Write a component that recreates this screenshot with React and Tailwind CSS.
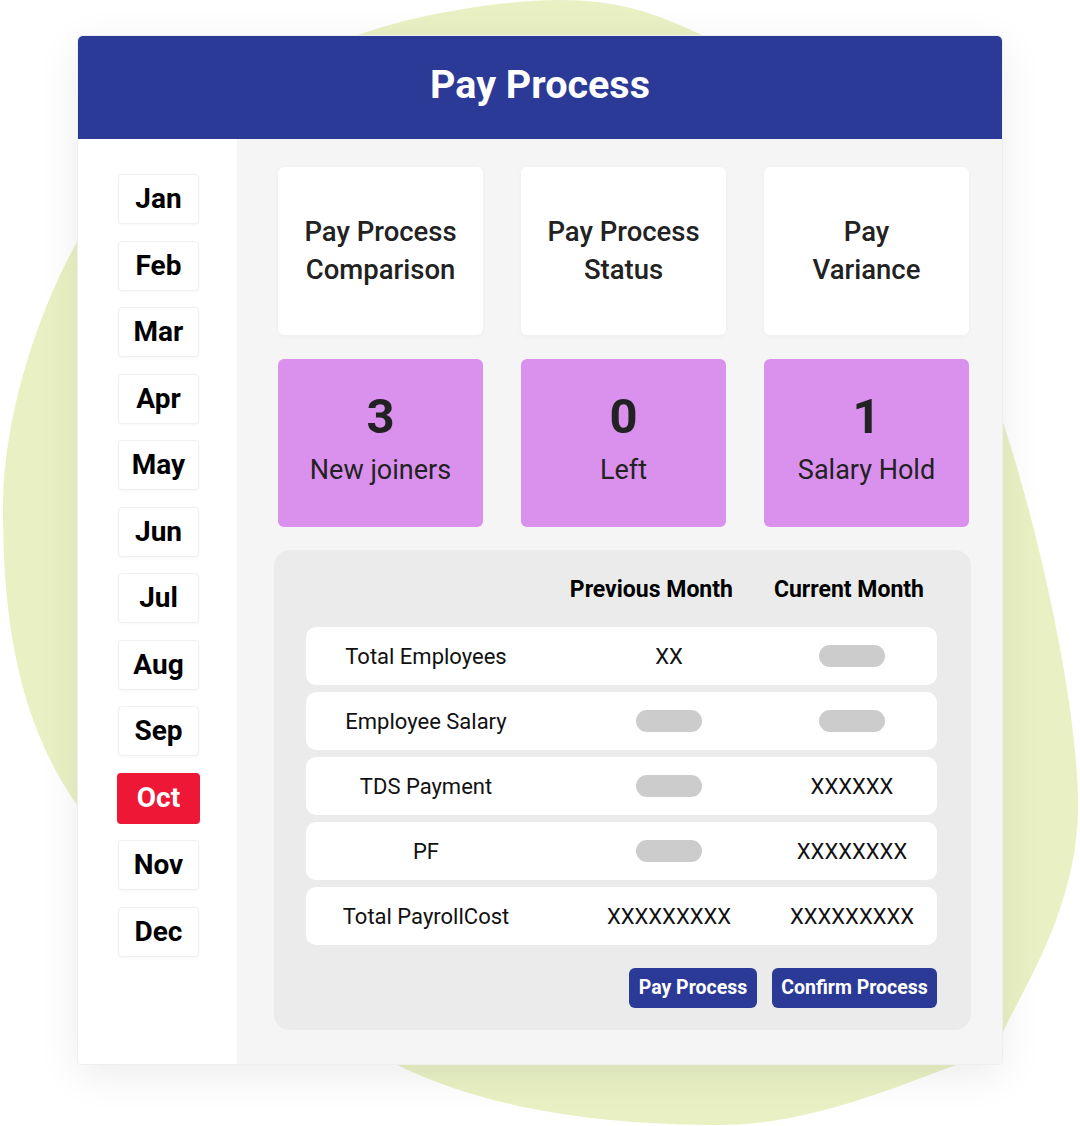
import React from 'react'

const months = ['Jan', 'Feb', 'Mar', 'Apr', 'May', 'Jun', 'Jul', 'Aug', 'Sep', 'Oct', 'Nov', 'Dec']

const topCards = [
  ['Pay Process', 'Comparison'],
  ['Pay Process', 'Status'],
  ['Pay', 'Variance'],
]

const stats = [
  { value: '3', label: 'New joiners' },
  { value: '0', label: 'Left' },
  { value: '1', label: 'Salary Hold' },
]

// null = grey placeholder pill
const rows = [
  { label: 'Total Employees', prev: 'XX', curr: null },
  { label: 'Employee Salary', prev: null, curr: null },
  { label: 'TDS Payment', prev: null, curr: 'XXXXXX' },
  { label: 'PF', prev: null, curr: 'XXXXXXXX' },
  { label: 'Total PayrollCost', prev: 'XXXXXXXXX', curr: 'XXXXXXXXX' },
]

// outline of the green backdrop blob
const blobPoints = [
  [560, 0], [702, 35], [860, 140], [1003, 422], [1078, 806], [1003, 1032], [962, 1063],
  [721, 1125], [393, 1063], [77, 805], [3, 507], [77, 242], [220, 125], [358, 35],
]

function smoothPath(pts) {
  const n = pts.length
  let d = `M ${pts[0][0]} ${pts[0][1]}`
  for (let i = 0; i < n; i++) {
    const p0 = pts[(i - 1 + n) % n]
    const p1 = pts[i]
    const p2 = pts[(i + 1) % n]
    const p3 = pts[(i + 2) % n]
    const c1 = [p1[0] + (p2[0] - p0[0]) / 6, p1[1] + (p2[1] - p0[1]) / 6]
    const c2 = [p2[0] - (p3[0] - p1[0]) / 6, p2[1] - (p3[1] - p1[1]) / 6]
    d += ` C ${c1[0]} ${c1[1]}, ${c2[0]} ${c2[1]}, ${p2[0]} ${p2[1]}`
  }
  return d + ' Z'
}

function Cell({ value }) {
  if (value === null) {
    return <div className="w-[66px] h-[22px] rounded-full bg-[#cccccc]" />
  }
  return <span className="whitespace-nowrap">{value}</span>
}

function Blob() {
  return (
    <svg className="absolute inset-0 w-[1080px] h-[1126px]" viewBox="0 0 1080 1126">
      <path d={smoothPath(blobPoints)} fill="#e9f1c4" />
    </svg>
  )
}

export default function App() {
  return (
    <div className="relative w-[1080px] h-[1126px] bg-white overflow-hidden font-['Roboto',sans-serif]">
      <Blob />
      <div className="relative ml-[77px] pt-[35px]">
        <div className="w-[926px] rounded-t-[6px] rounded-b-[4px] overflow-hidden bg-white shadow-[0_10px_40px_rgba(0,0,0,0.08)] border border-[#eeeeee]">
          <div className="h-[103px] bg-[#2b3a96] flex items-center justify-center">
            <h1 className="text-[39.5px] font-bold text-white leading-none -mt-[6px]">Pay Process</h1>
          </div>

          <div className="flex h-[925px]">
            <div className="w-[159px] bg-white pl-[40px] pt-[35px] flex flex-col gap-[16.5px]">
              {months.map(m => (
                <div
                  key={m}
                  className={
                    m === 'Oct'
                      ? 'w-[83px] -ml-[1px] h-[51px] rounded-[4px] bg-[#ee1836] text-white flex items-center justify-center text-[28px] font-bold'
                      : 'w-[81px] h-[50px] rounded-[4px] bg-white border border-[#f0f0f0] shadow-[0_1px_3px_rgba(0,0,0,0.04)] text-black flex items-center justify-center text-[28px] font-bold'
                  }
                >
                  {m}
                </div>
              ))}
            </div>

            <div className="flex-1 bg-[#f5f5f5] pt-[28px]">
              <div className="pl-[41px] grid grid-cols-[205px_205px_205px] gap-x-[38px] gap-y-[24px]">
                {topCards.map((t, i) => (
                  <div
                    key={i}
                    className="h-[168px] bg-white rounded-[6px] shadow-[0_1px_4px_rgba(0,0,0,0.04)] flex flex-col items-center justify-center text-[27.5px] font-medium text-[#222222] leading-[38px] text-center"
                  >
                    <span>{t[0]}</span>
                    <span>{t[1]}</span>
                  </div>
                ))}
                {stats.map(s => (
                  <div
                    key={s.label}
                    className="h-[168px] bg-[#da91ee] rounded-[6px] pb-[9px] flex flex-col items-center justify-center text-[#222222]"
                  >
                    <span className="text-[49px] font-bold leading-[56px]">{s.value}</span>
                    <span className="text-[27px] leading-[36px] mt-[7px]">{s.label}</span>
                  </div>
                ))}
              </div>

              <div className="mt-[23px] ml-[37px] w-[697px] h-[480px] bg-[#ebebeb] rounded-[16px] pt-[28px] pb-[22px]">
                <div className="flex justify-end gap-[41px] pr-[47px] text-[23px] font-bold text-black leading-[24px]">
                  <span>Previous Month</span>
                  <span>Current Month</span>
                </div>

                <div className="mt-[25px] ml-[32px] w-[631px] flex flex-col gap-[7px]">
                  {rows.map(r => (
                    <div
                      key={r.label}
                      className="h-[58px] bg-white rounded-[10px] grid grid-cols-[240px_246px_120px] items-center text-[22px] text-[#111111]"
                    >
                      <div className="flex justify-center">{r.label}</div>
                      <div className="flex justify-center"><Cell value={r.prev} /></div>
                      <div className="flex justify-center"><Cell value={r.curr} /></div>
                    </div>
                  ))}
                </div>

                <div className="mt-[23px] pr-[34px] flex justify-end gap-[15px]">
                  <button className="w-[128px] h-[40px] rounded-[6px] bg-[#2b3a96] text-white text-[19.5px] font-bold">
                    Pay Process
                  </button>
                  <button className="w-[165px] h-[40px] rounded-[6px] bg-[#2b3a96] text-white text-[19.5px] font-bold">
                    Confirm Process
                  </button>
                </div>
              </div>
            </div>
          </div>
        </div>
      </div>
    </div>
  )
}
